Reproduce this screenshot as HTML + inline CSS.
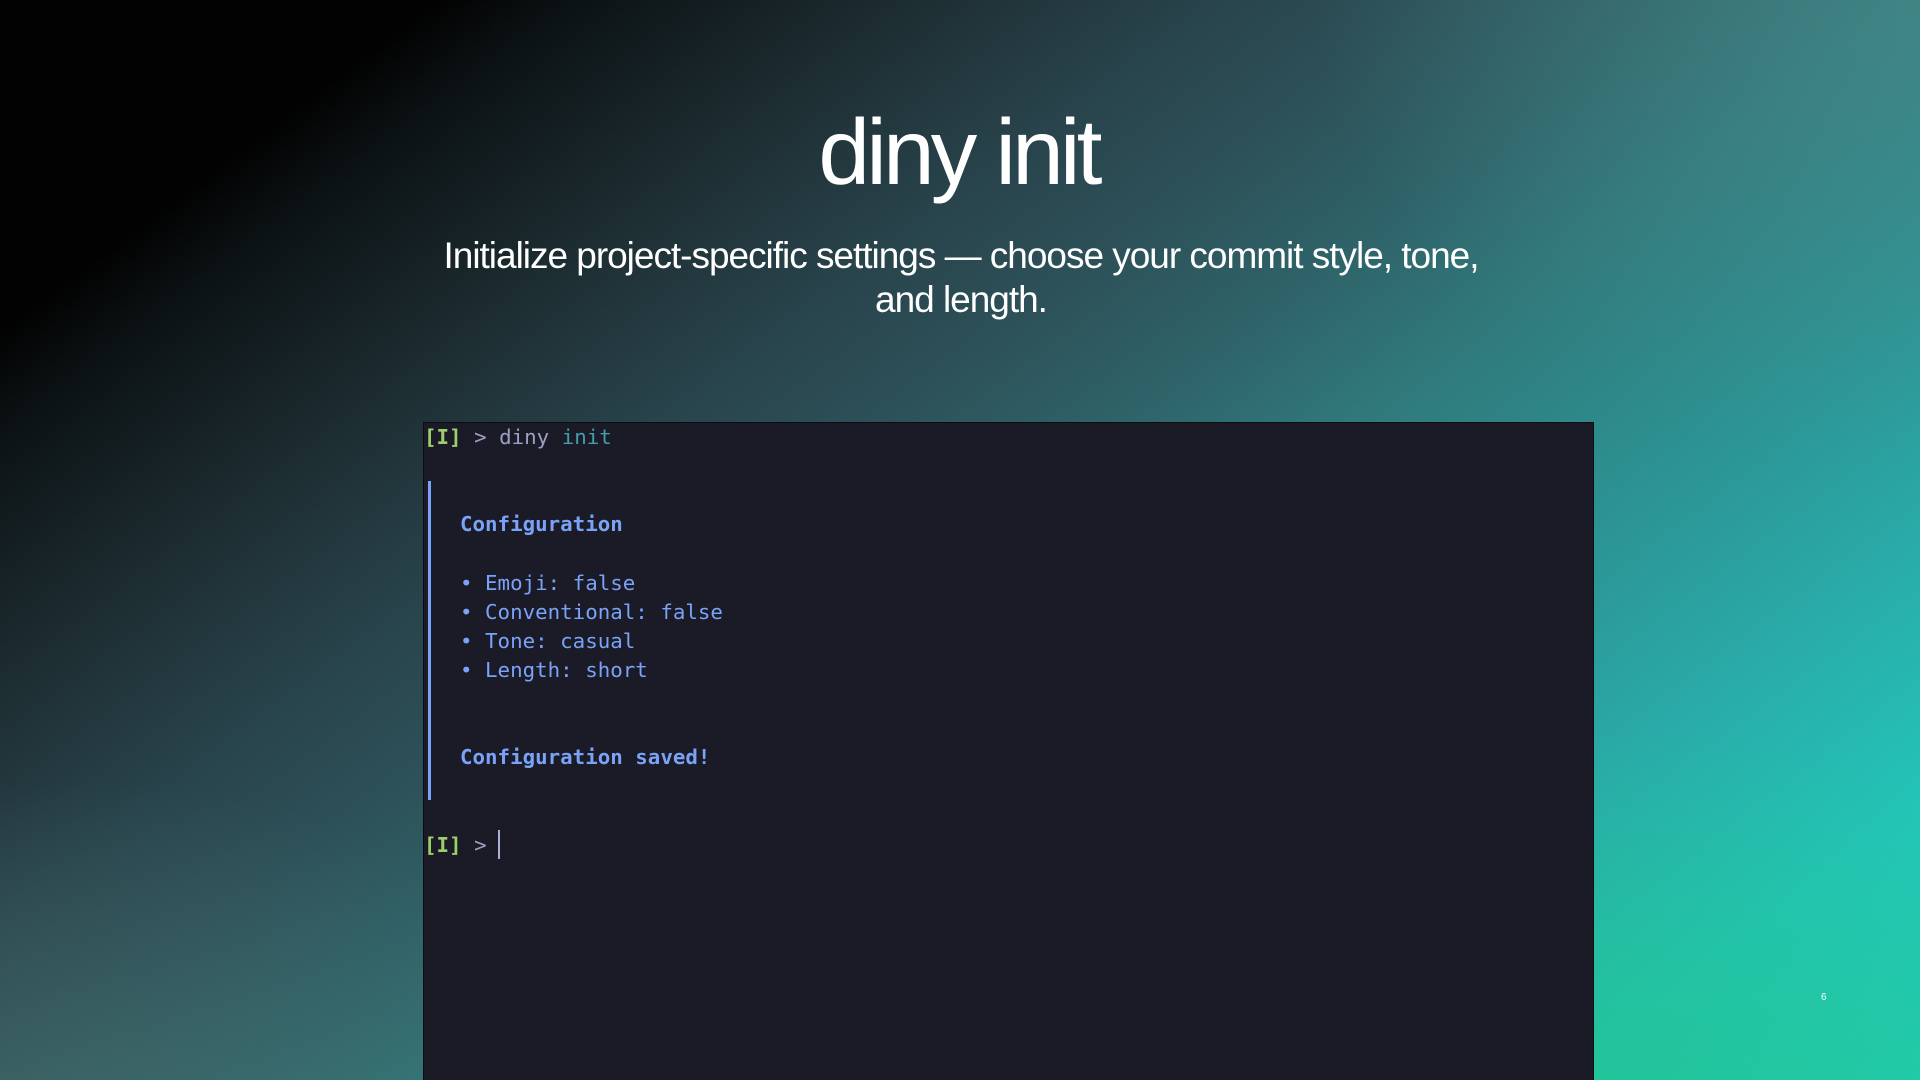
<!DOCTYPE html>
<html><head><meta charset="utf-8"><style>
html,body{margin:0;padding:0;width:1920px;height:1080px;overflow:hidden;background:#000}
.root{position:relative;width:1920px;height:1080px;overflow:hidden}
.bg{position:absolute;left:0;top:0;width:1920px;height:1080px;background:
radial-gradient(ellipse 700px 430px at 1560px 1150px,rgba(32,195,125,.62),rgba(32,195,125,0) 100%),
radial-gradient(ellipse 620px 360px at 60px 1140px,rgba(75,115,110,.55),rgba(75,115,110,0) 100%),
radial-gradient(ellipse 620px 480px at 1930px -20px,rgba(75,140,140,.6),rgba(75,140,140,0) 100%),
linear-gradient(143deg,#000 13%,#0a1012 17%,#1d2e33 28%,#27424a 36%,#2c5058 43%,#2d6268 50%,#2f787a 57%,#2b9494 69%,#28acaa 79%,#22c4b8 89%,#20cdb8 100%)}
.noise{position:absolute;left:0;top:0;opacity:.02}
.t{position:absolute;left:0;width:1920px;text-align:center;color:#fff;font-family:"Liberation Sans",sans-serif;white-space:nowrap}
h1{position:absolute;margin:0;left:0;top:95px;width:1917px;text-align:center;color:#fff;font:400 93px/114px "Liberation Sans",sans-serif;letter-spacing:-3.9px}
.s{font-size:37px;line-height:44px;letter-spacing:-1.02px}
.term{position:absolute;left:423px;top:422px;width:1169px;height:657px;background:#1a1b26;border:1px solid #0b0c12;border-bottom:0}
.l{position:absolute;left:0;font:20.8px/29px "DejaVu Sans Mono",monospace;white-space:pre;color:#a9b1d6}
.b{color:#7aa2f7}.bb{color:#7aa2f7;font-weight:700}.g{color:#9ece6a;font-weight:700}.c{color:#449dab}.m{color:#9aa1c5}
.bar{position:absolute;left:4px;top:58px;width:3px;height:319px;background:#7aa2f7}
.cur{position:absolute;left:74px;top:407px;width:2px;height:29px;background:#a9b1d6}
.n{position:absolute;left:1821px;top:991px;font:10px/14px "Liberation Sans",sans-serif;color:#fff}
</style></head><body>
<div class="root">
<div class="bg"></div>
<svg class="noise" width="1920" height="1080"><filter id="f"><feTurbulence type="fractalNoise" baseFrequency=".55" numOctaves="2"/><feColorMatrix type="saturate" values="1.5"/></filter><rect width="1920" height="1080" filter="url(#f)"/></svg>
<h1>diny init</h1>
<div class="t s" style="top:234px;left:1px">Initialize project-specific settings — choose your commit style, tone,</div>
<div class="t s" style="top:278px;left:1px">and length.</div>
<div class="term">
<div class="l" style="top:0"><span class="g">[I]</span><span class="m"> &gt; diny </span><span class="c">init</span></div>
<div class="bar"></div>
<div class="l bb" style="left:36px;top:87px">Configuration</div>
<div class="l b" style="left:36px;top:146px">• Emoji: false</div>
<div class="l b" style="left:36px;top:175px">• Conventional: false</div>
<div class="l b" style="left:36px;top:204px">• Tone: casual</div>
<div class="l b" style="left:36px;top:233px">• Length: short</div>
<div class="l bb" style="left:36px;top:320px">Configuration saved!</div>
<div class="l" style="top:408px"><span class="g">[I]</span><span class="m"> &gt; </span></div>
<div class="cur"></div>
</div>
<div class="n">6</div>
</div>
</body></html>
